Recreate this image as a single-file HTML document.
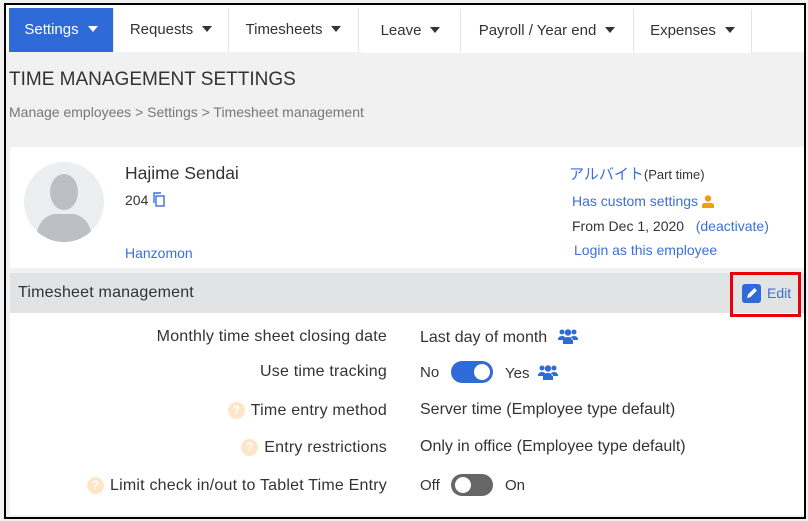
<!DOCTYPE html>
<html><head><style>
*{margin:0;padding:0;box-sizing:border-box}
body{width:808px;height:521px;background:#f1f1f1;font-family:"Liberation Sans","Noto Sans CJK JP",sans-serif;position:relative;overflow:hidden;color:#333}
.a{position:absolute;white-space:nowrap}
#frame{position:absolute;left:4px;top:3px;width:802px;height:516px;border:2px solid #000;background:#f1f1f1}
.tab{position:absolute;top:8px;height:44px;background:#fff;border-right:1px solid #e4e4e4;font-size:15px;color:#333;line-height:44px;text-align:center}
.car{display:inline-block;width:0;height:0;border-left:5px solid transparent;border-right:5px solid transparent;border-top:6px solid #333;margin-left:9px;vertical-align:2px}
.lbl{font-size:16px;color:#333;text-align:right;right:421px;letter-spacing:0.2px}
.val{font-size:16px;color:#333;left:420px}
.q{display:inline-block;width:17px;height:17px;border-radius:50%;background:#fde6c8;color:#fff;font-size:12px;line-height:17px;text-align:center;margin-right:6px;vertical-align:1px;font-weight:bold}
.link{color:#3d6fd8}
.tg{position:absolute;width:42px;height:22px;border-radius:11px}
.tg i{position:absolute;top:3px;width:16px;height:16px;border-radius:50%;background:#fff}
.ppl{display:inline-block;vertical-align:-2px}
</style></head><body>
<div id="frame"></div>
<div class="a" style="left:6px;top:5px;width:798px;height:47px;background:#fff"></div>
<div class="tab" style="left:9px;width:105px;background:#2f6ad9;color:#fff">Settings<span class="car" style="border-top-color:#fff"></span></div>
<div class="tab" style="left:114px;width:115px">Requests<span class="car"></span></div>
<div class="tab" style="left:229px;width:130px">Timesheets<span class="car"></span></div>
<div class="tab" style="left:361px;width:100px;top:9px">Leave<span class="car"></span></div>
<div class="tab" style="left:461px;width:173px;top:9px">Payroll / Year end<span class="car"></span></div>
<div class="tab" style="left:634px;width:118px;top:9px">Expenses<span class="car"></span></div>
<div class="a" style="left:9px;top:69px;font-size:19px;color:#333">TIME MANAGEMENT SETTINGS</div>
<div class="a" style="left:9px;top:104px;font-size:14px;color:#777">Manage employees &gt; Settings &gt; Timesheet management</div>
<div class="a" style="left:10px;top:147px;width:794px;height:368px;background:#fff"></div>
<svg class="a" style="left:24px;top:162px" width="80" height="80" viewBox="0 0 80 80"><circle cx="40" cy="40" r="40" fill="#eceef0"/><clipPath id="c"><circle cx="40" cy="40" r="40"/></clipPath><g clip-path="url(#c)" fill="#bcc0c4"><ellipse cx="40" cy="30" rx="14" ry="18"/><path d="M12 80 Q12 56 30 52 L50 52 Q68 56 68 80Z"/></g></svg>
<div class="a" style="left:125px;top:163px;font-size:17.5px;color:#333">Hajime Sendai</div>
<div class="a" style="left:125px;top:192px;font-size:14px;color:#333">204 <svg class="ppl" width="14" height="15" viewBox="0 0 14 15" fill="none" stroke="#3d6fd8" stroke-width="1.4"><rect x="4" y="4" width="8" height="10"/><path d="M2 11V1h7"/></svg></div>
<div class="a link" style="left:125px;top:245px;font-size:14px">Hanzomon</div>
<div class="a" style="left:569px;top:163px;font-size:15px"><span class="link">アルバイト</span><span style="font-size:13px;color:#333">(Part time)</span></div>
<div class="a link" style="left:572px;top:193px;font-size:14px">Has custom settings <svg class="ppl" width="12" height="13" viewBox="0 0 12 13" fill="#f39c12"><circle cx="6" cy="3.5" r="3.2"/><path d="M0 13V10.5Q0 8 3 8H9Q12 8 12 10.5V13Z"/></svg></div>
<div class="a" style="left:572px;top:218px;font-size:14px;color:#333">From Dec 1, 2020 &nbsp;&nbsp;<span class="link">(deactivate)</span></div>
<div class="a link" style="left:574px;top:242px;font-size:14px">Login as this employee</div>
<div class="a" style="left:10px;top:268px;width:794px;height:5px;background:#f1f1f1"></div>
<div class="a" style="left:10px;top:273px;width:794px;height:40px;background:#e2e3e5"></div>
<div class="a" style="left:18px;top:284px;font-size:16px;color:#333;letter-spacing:0.2px">Timesheet management</div>
<div class="a" style="left:730px;top:272px;width:71px;height:45px;border:3px solid #e8000b"></div>
<svg class="a" style="left:742px;top:284px" width="19" height="19" viewBox="0 0 19 19"><rect width="19" height="19" rx="3" fill="#2f6ad9"/><path d="M5 14l1-3.5 6.5-6.5 2.5 2.5-6.5 6.5z" fill="#fff"/></svg>
<div class="a link" style="left:767px;top:285px;font-size:14px">Edit</div>

<div class="a lbl" style="top:328px">Monthly time sheet closing date</div>
<div class="a val" style="top:328px">Last day of month <svg class="ppl" style="margin-left:6px" width="20" height="16" viewBox="0 0 20 16" fill="#2f6ad9"><circle cx="4" cy="4" r="2.5"/><circle cx="16" cy="4" r="2.5"/><circle cx="10" cy="4.5" r="3.2"/><path d="M0 12Q0 8 4 8Q6 8 7 9L6 12Z M20 12Q20 8 16 8Q14 8 13 9L14 12Z M5 16V12Q5 9 10 9Q15 9 15 12V16Z"/></svg></div>
<div class="a lbl" style="top:363px">Use time tracking</div>
<div class="a val" style="top:364px;font-size:15px">No</div>
<div class="tg" style="left:451px;top:361px;background:#2f6ad9"><i style="left:23px"></i></div>
<div class="a val" style="left:505px;top:364px;font-size:15px">Yes <svg class="ppl" style="margin-left:4px" width="20" height="16" viewBox="0 0 20 16" fill="#2f6ad9"><circle cx="4" cy="4" r="2.5"/><circle cx="16" cy="4" r="2.5"/><circle cx="10" cy="4.5" r="3.2"/><path d="M0 12Q0 8 4 8Q6 8 7 9L6 12Z M20 12Q20 8 16 8Q14 8 13 9L14 12Z M5 16V12Q5 9 10 9Q15 9 15 12V16Z"/></svg></div>
<div class="a lbl" style="top:402px"><span class="q">?</span>Time entry method</div>
<div class="a val" style="top:401px">Server time (Employee type default)</div>
<div class="a lbl" style="top:439px"><span class="q">?</span>Entry restrictions</div>
<div class="a val" style="top:438px">Only in office (Employee type default)</div>
<div class="a lbl" style="top:477px"><span class="q">?</span>Limit check in/out to Tablet Time Entry</div>
<div class="a val" style="top:477px;font-size:15px">Off</div>
<div class="tg" style="left:451px;top:474px;background:#666"><i style="left:4px"></i></div>
<div class="a val" style="left:505px;top:477px;font-size:15px">On</div>
</body></html>
